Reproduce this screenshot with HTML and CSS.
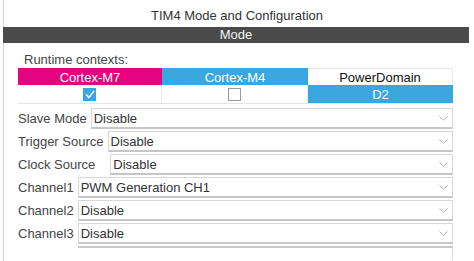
FILE: index.html
```html
<!DOCTYPE html>
<html lang="en">
  <head>
    <meta charset="UTF-8" />
    <meta name="viewport" content="width=device-width, initial-scale=1.0" />
    <title>TIM4 Mode and Configuration</title>
    <link rel="stylesheet" href="styles.css">
  </head>
  <body>
    <div class="panel">
      <div class="title">TIM4 Mode and Configuration</div>
      <div class="mode-bar">Mode</div>

      <div class="contexts-label">Runtime contexts:</div>
      <div class="contexts">
        <div class="cell head m7">Cortex-M7</div>
        <div class="cell head m4">Cortex-M4</div>
        <div class="cell head domain">PowerDomain</div>
        <div class="cell">
          <span class="check checked">
            <svg width="10" height="9" viewBox="0 0 10 9">
              <polyline points="1,4.5 3.8,7.5 9,1" fill="none" stroke="#fff" stroke-width="1.6" />
            </svg>
          </span>
        </div>
        <div class="cell"><span class="check"></span></div>
        <div class="cell d2">D2</div>
      </div>

      <div class="fields">
        <div class="field">
          <label>Slave Mode</label>
          <div class="select">Disable<svg class="chevron" width="9" height="5" viewBox="0 0 9 5"><polyline points="0.5,0.5 4.5,4.2 8.5,0.5" fill="none" stroke="#b4b4b4" /></svg></div>
        </div>
        <div class="field">
          <label>Trigger Source</label>
          <div class="select">Disable<svg class="chevron" width="9" height="5" viewBox="0 0 9 5"><polyline points="0.5,0.5 4.5,4.2 8.5,0.5" fill="none" stroke="#b4b4b4" /></svg></div>
        </div>
        <div class="field wide-gap">
          <label>Clock Source</label>
          <div class="select">Disable<svg class="chevron" width="9" height="5" viewBox="0 0 9 5"><polyline points="0.5,0.5 4.5,4.2 8.5,0.5" fill="none" stroke="#b4b4b4" /></svg></div>
        </div>
        <div class="field">
          <label>Channel1</label>
          <div class="select">PWM Generation CH1<svg class="chevron" width="9" height="5" viewBox="0 0 9 5"><polyline points="0.5,0.5 4.5,4.2 8.5,0.5" fill="none" stroke="#b4b4b4" /></svg></div>
        </div>
        <div class="field">
          <label>Channel2</label>
          <div class="select">Disable<svg class="chevron" width="9" height="5" viewBox="0 0 9 5"><polyline points="0.5,0.5 4.5,4.2 8.5,0.5" fill="none" stroke="#b4b4b4" /></svg></div>
        </div>
        <div class="field">
          <label>Channel3</label>
          <div class="select">Disable<svg class="chevron" width="9" height="5" viewBox="0 0 9 5"><polyline points="0.5,0.5 4.5,4.2 8.5,0.5" fill="none" stroke="#b4b4b4" /></svg></div>
        </div>
        <div class="field-stub"></div>
      </div>
    </div>
  </body>
</html>
```

FILE: styles.css
```css
body {
  margin: 0;
  height: 261px;
  overflow: hidden;
  background-color: #fff;
  font-family: "Liberation Sans", Arial, sans-serif;
  font-size: 13px;
  color: #3a3a3a;
}

.panel {
  margin-left: 3px;
  width: 466px;
  height: 261px;
  border-left: 1px solid #d2d2d2;
}

.title {
  height: 23px;
  padding-top: 4px;
  line-height: 23px;
  text-align: center;
  color: #333;
}

.mode-bar {
  height: 16px;
  line-height: 16px;
  margin-left: -1px;
  margin-right: 1px;
  text-align: center;
  background-color: #4b4b4b;
  color: #f2f2f2;
}

.contexts-label {
  margin: 9px 0 0 20px;
  line-height: 16px;
  color: #444;
}

.contexts {
  display: grid;
  grid-template-columns: 144px 146px 145px;
  grid-template-rows: 17px 19px;
  margin-left: 14px;
}

.cell {
  display: flex;
  justify-content: center;
  align-items: center;
  border-bottom: 1px solid #e4e4e4;
  border-right: 1px solid #ececec;
  box-sizing: border-box;
}

.cell.head {
  padding-top: 1px;
  border-bottom: none;
}

.m7 {
  background-color: #e5047f;
  color: #fff;
  border-right: none;
}

.m4 {
  background-color: #3aa7de;
  color: #fff;
  border-right: none;
}

.domain {
  color: #111;
  border-top: 1px solid #e6e6e6;
}

.d2 {
  background-color: #3aa7de;
  color: #fff;
  border-right: none;
}

.check {
  display: flex;
  justify-content: center;
  align-items: center;
  width: 11px;
  height: 11px;
  border: 1px solid #9a9a9a;
  background-color: #fff;
}

.check.checked {
  width: 13px;
  height: 13px;
  border: none;
  background-color: #3aa7de;
}

.fields {
  width: 435px;
  margin: 3px 0 0 14px;
}

.field {
  display: flex;
  align-items: center;
  gap: 4px;
  height: 23px;
}

.field.wide-gap {
  gap: 15px;
}

.field label {
  white-space: nowrap;
  color: #444;
}

.select {
  flex: 1;
  display: flex;
  align-items: center;
  height: 18px;
  padding-left: 2px;
  border: 1px solid #d8d8d8;
  border-bottom: 2px solid #c6c6c6;
  color: #333;
}

.field-stub {
  margin: 1px 0 0 60px;
  height: 12px;
  border-top: 2px solid #c6c6c6;
  border-right: 1px solid #d8d8d8;
}

.chevron {
  margin-left: auto;
  margin-right: 4px;
}
```
